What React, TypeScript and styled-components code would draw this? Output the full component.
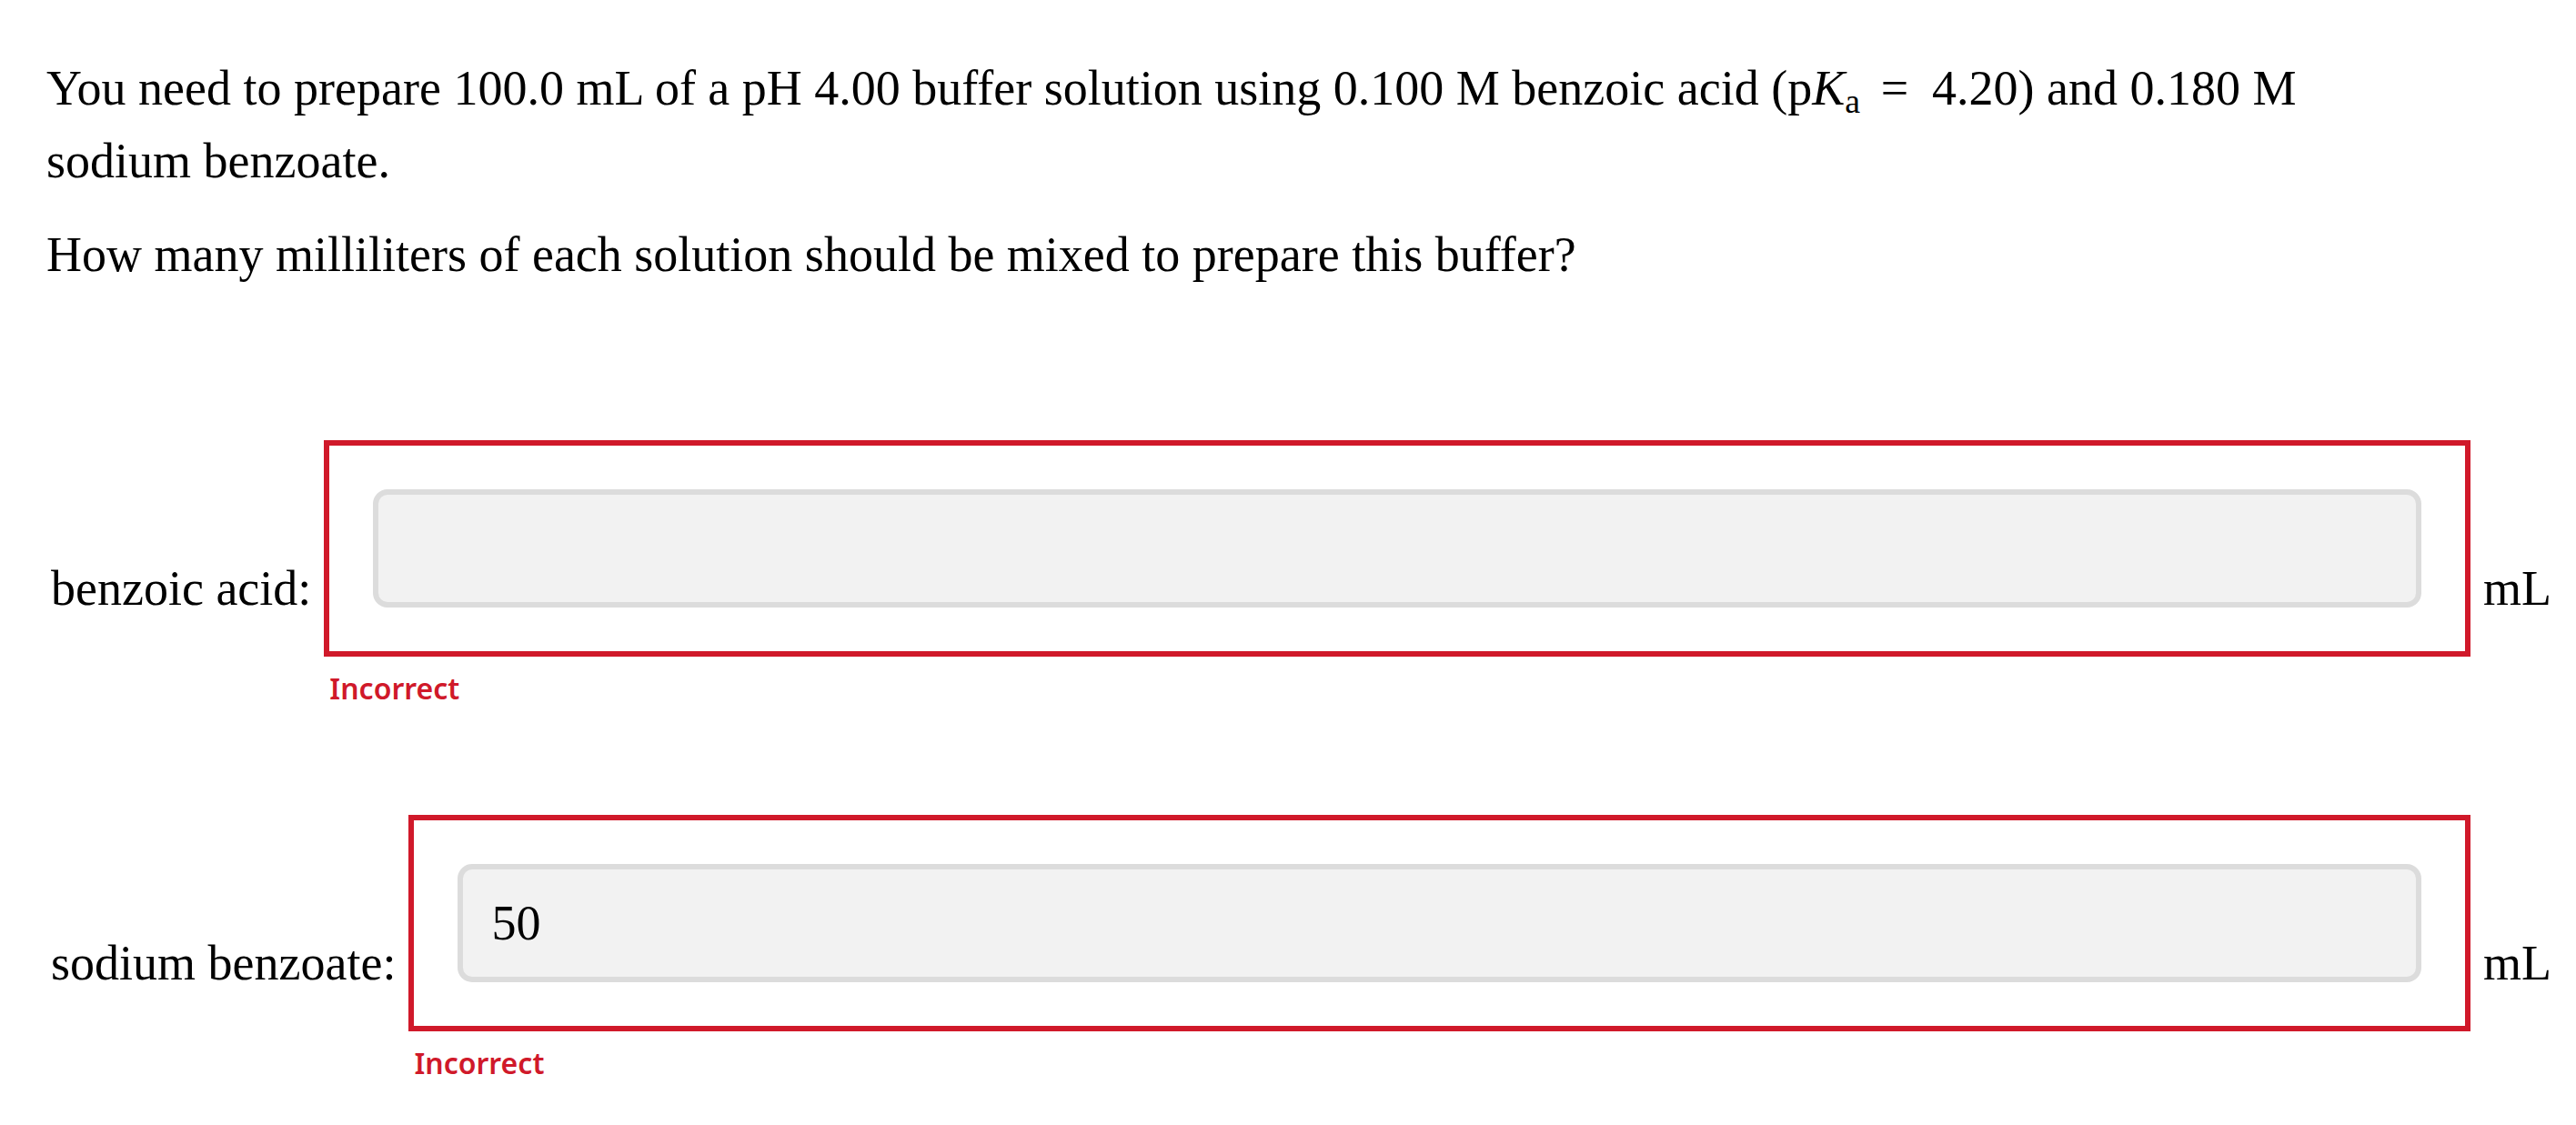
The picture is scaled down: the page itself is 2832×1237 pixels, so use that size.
import React from 'react';
import styled, { createGlobalStyle } from 'styled-components';

const GlobalStyle = createGlobalStyle`
  html, body {
    margin: 0;
    padding: 0;
    background: #ffffff;
  }
  body {
    font-family: "Liberation Serif", "Times New Roman", serif;
    color: #000000;
  }
`;

const Page = styled.div`
  padding: 57px 27px 40px 51px;
  font-family: "Liberation Serif", "Times New Roman", serif;
  font-size: 54px;
  line-height: 80px;
  color: #000;
`;

const Prompt = styled.p`
  margin: 0 0 23px 0;
  max-width: 2580px;
`;

const Math = styled.span`
  white-space: nowrap;
`;

const Italic = styled.i`
  font-style: italic;
`;

const Sub = styled.sub`
  font-size: 0.7em;
  vertical-align: -0.24em;
  line-height: 0;
`;

const Op = styled.span`
  margin: 0 0.48em 0 0.42em;
`;

const Answers = styled.div`
  margin-top: 164px;
  display: flex;
  flex-direction: column;
  gap: 117px;
`;

const Row = styled.div`
  display: grid;
  grid-template-columns: auto 1fr auto;
  grid-template-rows: auto auto;
  column-gap: 14px;
  align-items: end;
`;

const Label = styled.span`
  grid-column: 1;
  grid-row: 1;
  margin: 0 0 35px 5px;
  white-space: nowrap;
`;

const Unit = styled.span`
  grid-column: 3;
  grid-row: 1;
  margin-bottom: 35px;
`;

const FieldBox = styled.div<{ $invalid?: boolean }>`
  grid-column: 2;
  grid-row: 1;
  border: 6px solid ${(p) => (p.$invalid ? '#d0192a' : '#cccccc')};
  padding: 48px;
`;

const Input = styled.input`
  box-sizing: border-box;
  display: block;
  width: 100%;
  height: 130px;
  margin: 0;
  padding: 0 31px;
  border: 6px solid #dcdcdc;
  border-radius: 16px;
  background: #f2f2f2;
  font-family: "Liberation Serif", "Times New Roman", serif;
  font-size: 54px;
  color: #000;
  outline: none;
`;

const Feedback = styled.div`
  grid-column: 2;
  grid-row: 2;
  margin: 12px 0 0 6px;
  font-family: "Noto Sans", "Open Sans", sans-serif;
  font-weight: 600;
  font-size: 32px;
  line-height: 45px;
  color: #d0192a;
`;

type AnswerProps = {
  label: string;
  value: string;
  unit: string;
};

const AnswerRow = ({ label, value, unit }: AnswerProps) => (
  <Row>
    <Label>{label}</Label>
    <FieldBox $invalid>
      <Input type="text" defaultValue={value} aria-label={label} />
    </FieldBox>
    <Unit>{unit}</Unit>
    <Feedback>Incorrect</Feedback>
  </Row>
);

export default function App() {
  return (
    <>
      <GlobalStyle />
      <Page>
        <Prompt>
          You need to prepare 100.0 mL of a pH 4.00 buffer solution using 0.100 M benzoic acid (
          <Math>
            p<Italic>K</Italic>
            <Sub>a</Sub>
            <Op>=</Op>4.20
          </Math>
          {') and 0.180 M '}
          {'sodium benzoate.'}
        </Prompt>
        <Prompt>How many milliliters of each solution should be mixed to prepare this buffer?</Prompt>
        <Answers>
          <AnswerRow label="benzoic acid:" value="" unit="mL" />
          <AnswerRow label="sodium benzoate:" value="50" unit="mL" />
        </Answers>
      </Page>
    </>
  );
}
